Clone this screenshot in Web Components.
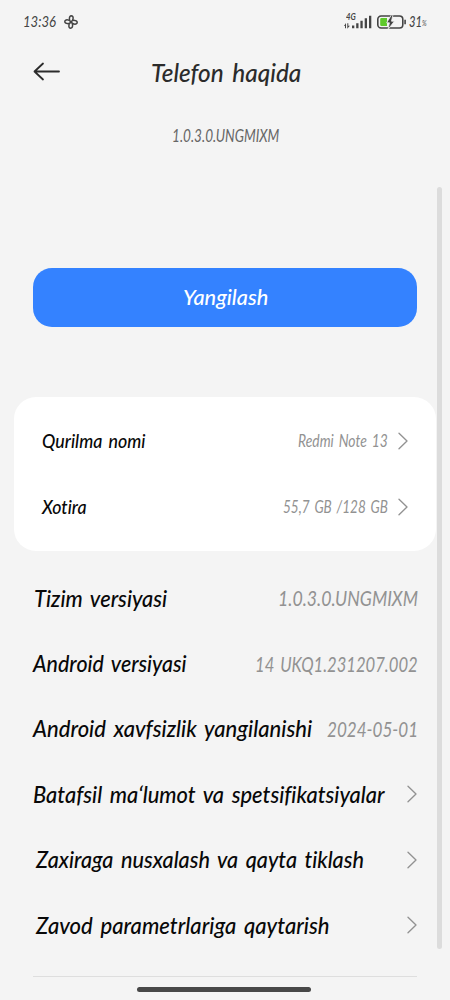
<!DOCTYPE html>
<html lang="uz">
<head>
<meta charset="utf-8">
<meta name="viewport" content="width=device-width">
<title>Telefon haqida</title>
<style>
body{margin:0;background:#f4f4f4;font-family:Lato,"Open Sans",sans-serif}
</style>
</head>
<body>
<about-phone></about-phone>
<script>
// Slanted label squeezed to an exact width.
class InkText extends HTMLElement{
  connectedCallback(){
    const w=+this.getAttribute('w'),s=+this.getAttribute('size');
    const r=this.attachShadow({mode:'open'});
    r.innerHTML=`<style>:host{display:block;flex:none;width:${w}px;height:${Math.round(s*1.2)}px;line-height:${Math.round(s*1.2)}px;font-size:${s}px;font-style:italic;font-variant-ligatures:none;word-spacing:.12em;white-space:nowrap}
    span{display:inline-block;transform-origin:0 50%;white-space:pre}</style><span><slot></slot></span>`;
    const e=r.querySelector('span'),n=e.offsetWidth;
    if(n)e.style.transform=`scaleX(${w/n})`;
  }
}
customElements.define('ink-text',InkText);

class ChevronIcon extends HTMLElement{
  connectedCallback(){
    this.attachShadow({mode:'open'}).innerHTML=`<style>:host{display:block;flex:none;width:10px;height:18px}svg{display:block}</style>
    <svg width="10" height="18" fill="none" stroke="#929292" stroke-width="1.35" stroke-linecap="round" stroke-linejoin="round"><path d="M1 1.3 9 9 1 16.7"/></svg>`;
  }
}
customElements.define('chevron-icon',ChevronIcon);

class StatusBar extends HTMLElement{
  connectedCallback(){
    this.attachShadow({mode:'open'}).innerHTML=`<style>
    :host{display:flex;align-items:center;height:43px;box-sizing:border-box;padding:0 23px 0 23px;color:#444}
    svg{display:block;flex:none}.fan{margin-left:8px}.sp{flex:1}.net{width:28px;height:14px;position:relative;margin-right:5px}
    .net ink-text{position:absolute;left:1.5px;top:-2.5px;font-weight:700}.pct{margin:4px 0 0 0}.n{margin-left:2px;font-weight:500}</style>
    <ink-text w="33" size="15.5">13:36</ink-text>
    <svg class="fan" width="14" height="14" fill="none" stroke="#444" stroke-width="1.5" stroke-linejoin="round"><path d="M7 7C4.6 5.6 5 1 7.3.8 9.8.8 9.8 5 7 7ZM7 7C8.4 4.6 13 5 13.2 7.3 13.2 9.8 9 9.8 7 7ZM7 7C9.4 8.4 9 13 6.7 13.2 4.2 13.2 4.2 9 7 7ZM7 7C5.6 9.4 1 9 .8 6.7.8 4.2 5 4.2 7 7Z"/></svg>
    <div class="sp"></div>
    <div class="net"><ink-text w="10" size="8.5">4G</ink-text>
    <svg width="28" height="14" fill="#444"><path d="M0 11l2-3v5.3H1V11zM3.3 8.3h1v2.5h1.6L3.3 13.8zM8 10.5h2.3v2.8H8zM12.2 8.2h2.3v5.1h-2.3zM16.4 5.7h2.3v7.6h-2.3zM20.7 3.3H23v10h-2.3zM25 .8h2.3v12.5H25z"/></svg></div>
    <svg width="30" height="14"><rect x=".8" y="1" width="25" height="12" rx="3.3" fill="none" stroke="#444" stroke-width="1.6"/><path d="M4.5 3h5.5v8H4.5a1.3 1.3 0 0 1-1.3-1.3V4.3A1.3 1.3 0 0 1 4.5 3z" fill="#5fc92b"/><path d="M14.7-.5 9.6 7.8h2.8L11 14.5l6.4-8.3h-2.9L16-.5z" fill="#444" stroke="#f4f4f4" stroke-width=".8"/><path d="M27.3 4.8h1.6v4.4h-1.6z" fill="#444"/></svg>
    <ink-text class="n" w="13" size="15.5">31</ink-text><ink-text class="pct" w="5" size="7.5">%</ink-text>`;
  }
}
customElements.define('status-bar',StatusBar);

class PageHeader extends HTMLElement{
  connectedCallback(){
    this.attachShadow({mode:'open'}).innerHTML=`<style>
    :host{display:flex;align-items:center;height:58px;padding-left:33px;color:#2b2b2b}
    svg{display:block;flex:none}.t{margin:0 0 1px 91px;font-weight:500}</style>
    <svg width="27" height="20" fill="none" stroke="#2b2b2b" stroke-width="1.8" stroke-linecap="round" stroke-linejoin="round"><path d="M26 9.5H1.5M10 1.5 1.5 9.5 10 17.5"/></svg>
    <ink-text class="t" w="150" size="25"><slot></slot></ink-text>`;
  }
}
customElements.define('page-header',PageHeader);

class UpdateButton extends HTMLElement{
  connectedCallback(){
    this.attachShadow({mode:'open'}).innerHTML=`<style>
    :host{display:flex;align-items:center;justify-content:center;height:58.5px;box-sizing:border-box;padding-bottom:1px;margin:0 33px;border-radius:19px;background:#3482ff;color:#fff;font-weight:500}</style>
    <ink-text w="85" size="22"><slot></slot></ink-text>`;
  }
}
customElements.define('update-button',UpdateButton);

class InfoRow extends HTMLElement{
  connectedCallback(){
    const g=k=>this.getAttribute(k);
    const small=this.hasAttribute('small');
    this.attachShadow({mode:'open'}).innerHTML=`<style>
    :host{display:flex;align-items:center;justify-content:space-between;height:65.4px;color:#080808;padding-left:${g('inset')||0}px;box-sizing:border-box}
    .l{font-weight:500}.r{display:flex;align-items:center;gap:10px;color:#929292}.r ink-text{margin-bottom:${small?0:1}px}chevron-icon{margin-right:${small?.5:1}px}</style>
    <ink-text class="l" w="${g('w')}" size="${small?18.5:22.5}"><slot></slot></ink-text>
    <div class="r">${g('value')?`<ink-text w="${g('vw')}" size="${small?16.5:21}">${g('value')}</ink-text>`:''}${this.hasAttribute('link')?'<chevron-icon></chevron-icon>':''}</div>`;
  }
}
customElements.define('info-row',InfoRow);

class InfoCard extends HTMLElement{
  connectedCallback(){
    this.attachShadow({mode:'open'}).innerHTML=`<style>
    :host{display:block;margin:70.5px 14px 0;height:154px;box-sizing:border-box;padding:11.5px 28px;background:#fff;border-radius:22px}</style><slot></slot>`;
  }
}
customElements.define('info-card',InfoCard);

class AboutPhone extends HTMLElement{
  connectedCallback(){
    this.attachShadow({mode:'open'}).innerHTML=`<style>
    :host{display:block;position:relative;width:450px;height:1000px;overflow:hidden;background:#f4f4f4}
    .ver{display:flex;justify-content:center;padding-top:25px;height:142px;color:#666}
    .list{margin:14.5px 32px 0 33px}
    .line{height:1px;background:#dedede;margin:18px 33px 0}
    .scroll{position:absolute;left:437px;top:187px;width:5px;height:762px;border-radius:3px;background:#dcdcdc}
    .home{position:absolute;left:137px;top:987px;width:174px;height:5px;border-radius:3px;background:#484848}</style>
    <status-bar></status-bar>
    <page-header>Telefon haqida</page-header>
    <div class="ver"><ink-text w="107" size="16.5">1.0.3.0.UNGMIXM</ink-text></div>
    <update-button>Yangilash</update-button>
    <info-card>
      <info-row small link w="104" value="Redmi Note 13" vw="90">Qurilma nomi</info-row>
      <info-row small link w="45" value="55,7 GB /128 GB" vw="105">Xotira</info-row>
    </info-card>
    <div class="list">
      <info-row inset="1" w="133" value="1.0.3.0.UNGMIXM" vw="140">Tizim versiyasi</info-row>
      <info-row w="154" value="14 UKQ1.231207.002" vw="163">Android versiyasi</info-row>
      <info-row w="279" value="2024-05-01" vw="91">Android xavfsizlik yangilanishi</info-row>
      <info-row link w="352">Batafsil ma‘lumot va spetsifikatsiyalar</info-row>
      <info-row link inset="3" w="328">Zaxiraga nusxalash va qayta tiklash</info-row>
      <info-row link inset="3" w="294">Zavod parametrlariga qaytarish</info-row>
    </div>
    <div class="line"></div>
    <div class="scroll"></div><div class="home"></div>`;
  }
}
customElements.define('about-phone',AboutPhone);
</script>
</body>
</html>
